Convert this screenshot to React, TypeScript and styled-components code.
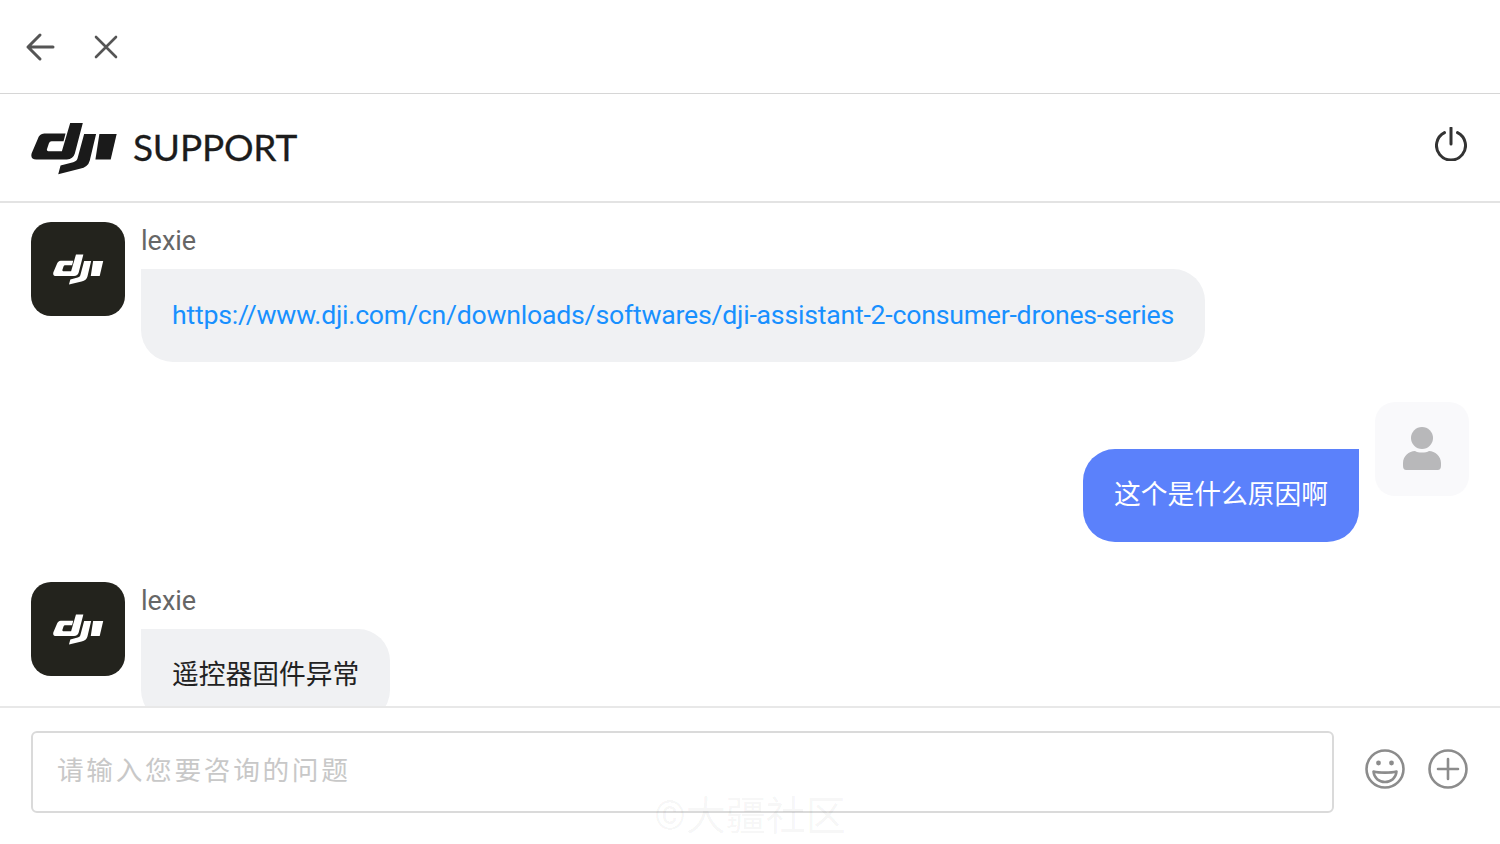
import React from "react";
import styled, { createGlobalStyle } from "styled-components";

const Global = createGlobalStyle`
  html, body { margin: 0; padding: 0; background: #fff; }
  body { font-family: Roboto, "Noto Sans CJK SC", sans-serif; }
`;

const Page = styled.div`
  position: relative;
  width: 1500px;
  height: 844px;
  display: flex;
  flex-direction: column;
  overflow: hidden;
  background: #fff;
`;

const NavBar = styled.nav`
  height: 93px;
  flex: none;
  display: flex;
  align-items: center;
  gap: 39px;
  padding-left: 25px;
  border-bottom: 1px solid #d6d6d6;
`;

const NavIcon = styled.svg<{ $weight: number }>`
  display: block;
  flex: none;
  fill: none;
  stroke: #555;
  stroke-width: ${(p) => p.$weight};
  stroke-linecap: round;
  stroke-linejoin: round;
`;

const Header = styled.header`
  height: 107px;
  flex: none;
  display: flex;
  align-items: center;
  justify-content: space-between;
  padding: 0 31px;
  border-bottom: 2px solid #e3e3e3;
  box-sizing: content-box;
`;

const Brand = styled.div`
  display: flex;
  align-items: center;
  gap: 15px;
`;

const BrandText = styled.span`
  font-family: Lato, sans-serif;
  font-size: 37px;
  line-height: 44px;
  color: #1c1c1c;
  letter-spacing: -0.2px;
  -webkit-text-stroke: 0.3px #1c1c1c;
  margin-bottom: 2px;
`;

const PowerIcon = styled.svg`
  display: block;
  fill: none;
  stroke: #333;
  stroke-width: 3;
  stroke-linecap: round;
  margin: 0 2px 8px 0;
`;

const Chat = styled.main`
  flex: 1;
  min-height: 0;
  overflow: hidden;
  display: flex;
  flex-direction: column;
  gap: 40px;
  padding: 19px 31px 0;
`;

const Row = styled.section<{ $mine?: boolean }>`
  display: flex;
  gap: 16px;
  flex: none;
  justify-content: ${(p) => (p.$mine ? "flex-end" : "flex-start")};
`;

const Avatar = styled.div<{ $mine?: boolean }>`
  width: 94px;
  height: 94px;
  flex: none;
  border-radius: 20px;
  display: flex;
  align-items: center;
  justify-content: center;
  background: ${(p) => (p.$mine ? "#f9f9fb" : "#23231d")};
`;

const UserGlyph = styled.svg`
  display: block;
  fill: #b8b8ba;
`;

const Body = styled.div`
  display: flex;
  flex-direction: column;
`;

const Name = styled.div`
  height: 47px;
  font-size: 27px;
  line-height: 38px;
  color: #666;
`;

const NameGap = styled.div`
  height: 47px;
`;

const Bubble = styled.div<{ $mine?: boolean }>`
  box-sizing: border-box;
  height: 93px;
  padding: 0 31px 6px;
  display: flex;
  align-items: center;
  font-size: 26.75px;
  white-space: nowrap;
  color: ${(p) => (p.$mine ? "#fff" : "#222")};
  background: ${(p) => (p.$mine ? "#5b81fb" : "#f0f1f3")};
  border-radius: ${(p) => (p.$mine ? "32px 0 32px 32px" : "0 32px 32px 32px")};
`;

const Link = styled.a`
  color: #1890ff;
  text-decoration: none;
  font-size: 26.67px;
  letter-spacing: -0.23px;
  margin-top: 4px;
`;

const Footer = styled.footer`
  height: 138px;
  flex: none;
  box-sizing: border-box;
  border-top: 2px solid #e8e8e8;
  display: flex;
  align-items: flex-start;
  padding: 23px 31px 0;
`;

const InputBox = styled.div`
  box-sizing: border-box;
  width: 1303px;
  height: 82px;
  border: 2px solid #dadada;
  border-radius: 6px;
  display: flex;
  align-items: center;
  padding: 0 0 8px 24px;
  font-size: 26.67px;
  letter-spacing: 2.7px;
  color: #c8c8c8;
`;

const Actions = styled.div`
  display: flex;
  gap: 23px;
  margin-left: 31px;
  padding-top: 18px;
`;

const ActionIcon = styled.svg`
  display: block;
  fill: none;
  stroke: #8c8c8c;
  stroke-width: 2.6;
  stroke-linecap: round;
  stroke-linejoin: round;
`;

const Watermark = styled.div`
  position: absolute;
  left: 0;
  right: 0;
  bottom: 2px;
  text-align: center;
  font-size: 40px;
  line-height: 50px;
  color: rgba(0, 0, 0, 0.045);
  pointer-events: none;
`;

const LogoSvg = styled.svg`
  display: block;
  flex: none;
  margin-top: 2px;
`;

const LogoMark = ({ width, color }: { width: number; color: string }) => (
  <LogoSvg width={width} height={(width * 160) / 262} viewBox="18 12 262 160" fill={color}>
    <path d="M58 47H122L116 70H80Q74 70 72 76L66 94Q65 100 70 100H111L136 15H174L150 107Q145 124 126 125H34Q15 125 20 106L38 64Q43 48 58 47Z" />
    <path d="M178 48H214L195 128Q190 148 165 153L100 169L107 143L145 133Q156 130 158 122Z" />
    <path d="M224 48H276L258 125H212Z" />
  </LogoSvg>
);

const Agent = () => (
  <Avatar>
    <LogoMark width={51} color="#fff" />
  </Avatar>
);

export default function App() {
  return (
    <Page>
      <Global />
      <NavBar>
        <NavIcon width="30" height="30" viewBox="0 0 30 30" $weight={3}>
          <path d="M28 15H3M15 3L3 15L15 27" />
        </NavIcon>
        <NavIcon width="24" height="24" viewBox="0 0 24 24" $weight={2.6}>
          <path d="M2 2L22 22M22 2L2 22" />
        </NavIcon>
      </NavBar>
      <Header>
        <Brand>
          <LogoMark width={87} color="#1a1a1a" />
          <BrandText>SUPPORT</BrandText>
        </Brand>
        <PowerIcon width="32" height="34" viewBox="0 0 32 34">
          <path d="M9.5 5.6A14.5 14.5 0 1 0 22.5 5.6" />
          <path d="M16 1V17" />
        </PowerIcon>
      </Header>
      <Chat>
        <Row>
          <Agent />
          <Body>
            <Name>lexie</Name>
            <Bubble>
              <Link>https://www.dji.com/cn/downloads/softwares/dji-assistant-2-consumer-drones-series</Link>
            </Bubble>
          </Body>
        </Row>
        <Row $mine>
          <Body>
            <NameGap />
            <Bubble $mine>这个是什么原因啊</Bubble>
          </Body>
          <Avatar $mine>
            <UserGlyph width="40" height="46" viewBox="0 0 40 46">
              <circle cx="20" cy="12" r="11" />
              <path d="M1 39V37C1 30 7 25 13 25C16 27 24 27 27 25C33 25 39 30 39 37V39C39 43 38 44 35 44H5C2 44 1 43 1 39Z" />
            </UserGlyph>
          </Avatar>
        </Row>
        <Row>
          <Agent />
          <Body>
            <Name>lexie</Name>
            <Bubble>遥控器固件异常</Bubble>
          </Body>
        </Row>
      </Chat>
      <Footer>
        <InputBox>请输入您要咨询的问题</InputBox>
        <Actions>
          <ActionIcon width="40" height="40" viewBox="0 0 40 40">
            <circle cx="20" cy="20" r="18.5" />
            <circle cx="13.5" cy="14" r="2.4" fill="#8c8c8c" stroke="none" />
            <circle cx="26.5" cy="14" r="2.4" fill="#8c8c8c" stroke="none" />
            <path d="M8.5 22.5C14 24 26 24 31.5 22.5C31 29 26 33 20 33C14 33 9 29 8.5 22.5Z" />
          </ActionIcon>
          <ActionIcon width="40" height="40" viewBox="0 0 40 40">
            <circle cx="20" cy="20" r="18.5" />
            <path d="M10 20H30M20 10V30" />
          </ActionIcon>
        </Actions>
      </Footer>
      <Watermark>©大疆社区</Watermark>
    </Page>
  );
}
